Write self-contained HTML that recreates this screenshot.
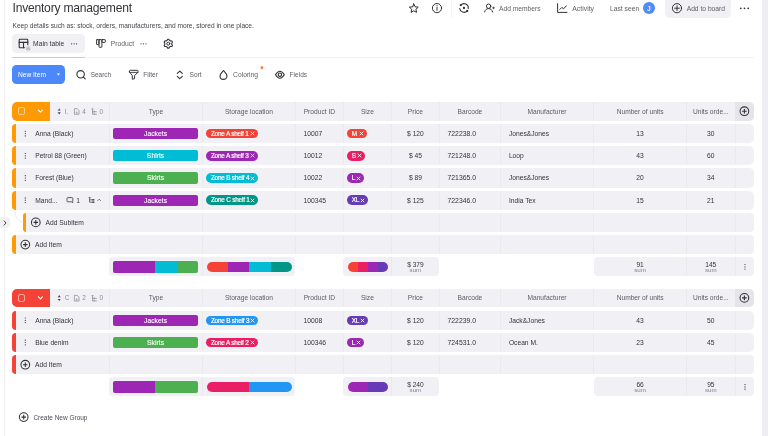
<!DOCTYPE html>
<html><head><meta charset="utf-8"><style>
html,body{margin:0;padding:0;}
body{width:768px;height:436px;overflow:hidden;position:relative;background:#fff;font-family:"Liberation Sans",sans-serif;}
.t{position:absolute;white-space:nowrap;line-height:1;}
.b{position:absolute;}
svg.b{overflow:visible;}
</style></head><body>
<div id="root" style="position:absolute;left:0;top:0;width:768px;height:436px;overflow:hidden;background:#fff;will-change:transform;">
<div class="b" style="left:4.00px;top:0.00px;width:0.80px;height:436.00px;background:#efeff3;border-radius:0;"></div>
<div class="b" style="left:762.00px;top:0.00px;width:6.00px;height:436.00px;background:#efeff3;border-radius:0;"></div>
<div class="t" style="left:12.50px;top:2px;font-size:12.1px;color:#323338;font-weight:400;letter-spacing:-0.22px;">Inventory management</div>
<div class="t" style="left:12.50px;top:23px;font-size:6.62px;color:#44454d;font-weight:400;">Keep details such as: stock, orders, manufacturers, and more, stored in one place.</div>
<div class="b" style="left:450.80px;top:0.00px;width:0.50px;height:18.00px;background:#f3f3f6;border-radius:0;"></div>
<div class="t" style="left:499.00px;top:6px;font-size:6.68px;color:#606168;font-weight:400;">Add members</div>
<div class="t" style="left:572.30px;top:6px;font-size:6.85px;color:#606168;font-weight:400;">Activity</div>
<div class="t" style="left:610.00px;top:6px;font-size:6.73px;color:#606168;font-weight:400;">Last seen</div>
<div class="b" style="left:643.00px;top:2.40px;width:11.60px;height:11.60px;background:#4f8cf6;border-radius:50%;"></div>
<div class="t" style="left:549.00px;width:200px;text-align:center;top:6px;font-size:6.6px;color:#ffffff;font-weight:400;-webkit-text-stroke:0.2px #fff;">J</div>
<div class="b" style="left:665.30px;top:-6.00px;width:65.70px;height:24.30px;background:#f0f0f5;border-radius:5px;"></div>
<div class="t" style="left:686.70px;top:6px;font-size:6.69px;color:#606168;font-weight:400;">Add to board</div>
<div class="b" style="left:12.00px;top:34.30px;width:73.20px;height:19.10px;background:#f0f0f5;border-radius:4.5px;"></div>
<div class="t" style="left:33.10px;top:41px;font-size:6.74px;color:#323338;font-weight:400;">Main table</div>
<div class="b" style="left:12.00px;top:56.50px;width:73.20px;height:1.10px;background:#b4cff9;border-radius:0;"></div>
<div class="b" style="left:85.20px;top:56.80px;width:669.30px;height:0.70px;background:#f2f2f5;border-radius:0;"></div>
<div class="t" style="left:110.80px;top:41px;font-size:6.74px;color:#606168;font-weight:400;">Product</div>
<div class="b" style="left:12.00px;top:65.20px;width:52.80px;height:18.80px;background:#4d88fa;border-radius:4.5px;"></div>
<div class="t" style="left:17.90px;top:72px;font-size:6.65px;color:#ffffff;font-weight:400;">New Item</div>
<div class="t" style="left:90.80px;top:72px;font-size:6.4px;color:#606168;font-weight:400;">Search</div>
<div class="t" style="left:143.30px;top:72px;font-size:6.57px;color:#606168;font-weight:400;">Filter</div>
<div class="t" style="left:189.60px;top:72px;font-size:6.6px;color:#606168;font-weight:400;">Sort</div>
<div class="t" style="left:233.10px;top:72px;font-size:6.71px;color:#606168;font-weight:400;">Coloring</div>
<div class="t" style="left:289.60px;top:72px;font-size:6.55px;color:#606168;font-weight:400;">Fields</div>
<div class="b" style="left:12.00px;top:101.80px;width:742.00px;height:18.80px;background:#f0f0f5;border-radius:5px;"></div>
<div class="b" style="left:735.00px;top:101.80px;width:19.00px;height:18.80px;background:#e4e4ea;border-radius:0 5px 5px 0;"></div>
<div class="b" style="left:12.00px;top:101.80px;width:37.80px;height:18.80px;background:#ff9a05;border-radius:5px 0 0 5px;"></div>
<div class="b" style="left:108.90px;top:101.80px;width:0.80px;height:18.80px;background:#e9e9ef;border-radius:0;"></div>
<div class="b" style="left:202.10px;top:101.80px;width:0.80px;height:18.80px;background:#e9e9ef;border-radius:0;"></div>
<div class="b" style="left:294.90px;top:101.80px;width:0.80px;height:18.80px;background:#e9e9ef;border-radius:0;"></div>
<div class="b" style="left:343.00px;top:101.80px;width:0.80px;height:18.80px;background:#e9e9ef;border-radius:0;"></div>
<div class="b" style="left:391.00px;top:101.80px;width:0.80px;height:18.80px;background:#e9e9ef;border-radius:0;"></div>
<div class="b" style="left:439.10px;top:101.80px;width:0.80px;height:18.80px;background:#e9e9ef;border-radius:0;"></div>
<div class="b" style="left:500.00px;top:101.80px;width:0.80px;height:18.80px;background:#e9e9ef;border-radius:0;"></div>
<div class="b" style="left:593.20px;top:101.80px;width:0.80px;height:18.80px;background:#e9e9ef;border-radius:0;"></div>
<div class="b" style="left:686.20px;top:101.80px;width:0.80px;height:18.80px;background:#e9e9ef;border-radius:0;"></div>
<div class="b" style="left:18.00px;top:107.40px;width:7.20px;height:7.80px;background:transparent;border-radius:2px;box-sizing:border-box;border:0.8px solid rgba(255,255,255,0.55);"></div>
<div class="t" style="left:64.80px;top:109px;font-size:6.4px;color:#8a8b96;font-weight:400;">I.</div>
<div class="t" style="left:82.30px;top:109px;font-size:6.4px;color:#8a8b96;font-weight:400;">4</div>
<div class="t" style="left:99.40px;top:109px;font-size:6.4px;color:#8a8b96;font-weight:400;">0</div>
<div class="t" style="left:55.90px;width:200px;text-align:center;top:109px;font-size:6.65px;color:#5c5d64;font-weight:400;">Type</div>
<div class="t" style="left:148.90px;width:200px;text-align:center;top:109px;font-size:6.65px;color:#5c5d64;font-weight:400;">Storage location</div>
<div class="t" style="left:219.35px;width:200px;text-align:center;top:109px;font-size:6.65px;color:#5c5d64;font-weight:400;">Product ID</div>
<div class="t" style="left:267.40px;width:200px;text-align:center;top:109px;font-size:6.65px;color:#5c5d64;font-weight:400;">Size</div>
<div class="t" style="left:315.45px;width:200px;text-align:center;top:109px;font-size:6.65px;color:#5c5d64;font-weight:400;">Price</div>
<div class="t" style="left:369.95px;width:200px;text-align:center;top:109px;font-size:6.65px;color:#5c5d64;font-weight:400;">Barcode</div>
<div class="t" style="left:447.00px;width:200px;text-align:center;top:109px;font-size:6.65px;color:#5c5d64;font-weight:400;">Manufacturer</div>
<div class="t" style="left:540.10px;width:200px;text-align:center;top:109px;font-size:6.65px;color:#5c5d64;font-weight:400;">Number of units</div>
<div class="t" style="left:610.80px;width:200px;text-align:center;top:109px;font-size:6.65px;color:#5c5d64;font-weight:400;">Units orde...</div>

<div class="b" style="left:12.00px;top:124.00px;width:742.00px;height:19.20px;background:#f0f0f5;border-radius:4px 5px 5px 4px;"></div>
<div class="b" style="left:12.00px;top:124.00px;width:4.00px;height:19.20px;background:#ff9a05;border-radius:4px 0 0 4px;"></div>
<div class="b" style="left:108.90px;top:124.00px;width:0.80px;height:19.20px;background:#e9e9ef;border-radius:0;"></div>
<div class="b" style="left:202.10px;top:124.00px;width:0.80px;height:19.20px;background:#e9e9ef;border-radius:0;"></div>
<div class="b" style="left:294.90px;top:124.00px;width:0.80px;height:19.20px;background:#e9e9ef;border-radius:0;"></div>
<div class="b" style="left:343.00px;top:124.00px;width:0.80px;height:19.20px;background:#e9e9ef;border-radius:0;"></div>
<div class="b" style="left:391.00px;top:124.00px;width:0.80px;height:19.20px;background:#e9e9ef;border-radius:0;"></div>
<div class="b" style="left:439.10px;top:124.00px;width:0.80px;height:19.20px;background:#e9e9ef;border-radius:0;"></div>
<div class="b" style="left:500.00px;top:124.00px;width:0.80px;height:19.20px;background:#e9e9ef;border-radius:0;"></div>
<div class="b" style="left:593.20px;top:124.00px;width:0.80px;height:19.20px;background:#e9e9ef;border-radius:0;"></div>
<div class="b" style="left:686.20px;top:124.00px;width:0.80px;height:19.20px;background:#e9e9ef;border-radius:0;"></div>
<div class="b" style="left:734.60px;top:124.00px;width:0.80px;height:19.20px;background:#e9e9ef;border-radius:0;"></div>

<div class="t" style="left:35.20px;top:131px;font-size:6.68px;color:#323338;font-weight:400;">Anna (Black)</div>
<div class="b" style="left:112.90px;top:128.05px;width:85.30px;height:11.10px;background:#9d27b4;border-radius:2px;"></div>
<div class="t" style="left:55.55px;width:200px;text-align:center;top:131px;font-size:6.8px;color:#ffffff;font-weight:400;-webkit-text-stroke:0.1px #fff;">Jackets</div>
<div class="b" style="left:206.40px;top:128.85px;width:51.90px;height:9.50px;background:#f44336;border-radius:5px;"></div>
<div class="t" style="left:210.90px;top:131px;font-size:6.4px;color:#ffffff;font-weight:400;-webkit-text-stroke:0.2px #fff;letter-spacing:-0.2px;">Zone A shelf 1</div>
<svg class="b" style="left:250.00px;top:131.20px;" width="5" height="5" viewBox="0 0 5 5"><path d="M0.75 0.75 L4.25 4.25 M4.25 0.75 L0.75 4.25" stroke="#ffffff" stroke-width="0.85" stroke-linecap="butt"/></svg>
<div class="t" style="left:303.60px;top:131px;font-size:6.76px;color:#323338;font-weight:400;">10007</div>
<div class="b" style="left:347.30px;top:128.85px;width:19.50px;height:9.50px;background:#f44336;border-radius:5px;"></div>
<div class="t" style="left:351.80px;top:131px;font-size:6.4px;color:#ffffff;font-weight:400;-webkit-text-stroke:0.2px #fff;letter-spacing:-0.2px;">M</div>
<svg class="b" style="left:358.50px;top:131.20px;" width="5" height="5" viewBox="0 0 5 5"><path d="M0.75 0.75 L4.25 4.25 M4.25 0.75 L0.75 4.25" stroke="#ffffff" stroke-width="0.85" stroke-linecap="butt"/></svg>
<div class="t" style="left:315.45px;width:200px;text-align:center;top:131px;font-size:6.7px;color:#323338;font-weight:400;">$ 120</div>
<div class="t" style="left:447.50px;top:131px;font-size:6.83px;color:#323338;font-weight:400;">722238.0</div>
<div class="t" style="left:508.90px;top:131px;font-size:6.7px;color:#323338;font-weight:400;">Jones&amp;Jones</div>
<div class="t" style="left:540.10px;width:200px;text-align:center;top:131px;font-size:6.7px;color:#323338;font-weight:400;">13</div>
<div class="t" style="left:610.80px;width:200px;text-align:center;top:131px;font-size:6.7px;color:#323338;font-weight:400;">30</div>
<div class="b" style="left:12.00px;top:146.20px;width:742.00px;height:19.20px;background:#f0f0f5;border-radius:4px 5px 5px 4px;"></div>
<div class="b" style="left:12.00px;top:146.20px;width:4.00px;height:19.20px;background:#ff9a05;border-radius:4px 0 0 4px;"></div>
<div class="b" style="left:108.90px;top:146.20px;width:0.80px;height:19.20px;background:#e9e9ef;border-radius:0;"></div>
<div class="b" style="left:202.10px;top:146.20px;width:0.80px;height:19.20px;background:#e9e9ef;border-radius:0;"></div>
<div class="b" style="left:294.90px;top:146.20px;width:0.80px;height:19.20px;background:#e9e9ef;border-radius:0;"></div>
<div class="b" style="left:343.00px;top:146.20px;width:0.80px;height:19.20px;background:#e9e9ef;border-radius:0;"></div>
<div class="b" style="left:391.00px;top:146.20px;width:0.80px;height:19.20px;background:#e9e9ef;border-radius:0;"></div>
<div class="b" style="left:439.10px;top:146.20px;width:0.80px;height:19.20px;background:#e9e9ef;border-radius:0;"></div>
<div class="b" style="left:500.00px;top:146.20px;width:0.80px;height:19.20px;background:#e9e9ef;border-radius:0;"></div>
<div class="b" style="left:593.20px;top:146.20px;width:0.80px;height:19.20px;background:#e9e9ef;border-radius:0;"></div>
<div class="b" style="left:686.20px;top:146.20px;width:0.80px;height:19.20px;background:#e9e9ef;border-radius:0;"></div>
<div class="b" style="left:734.60px;top:146.20px;width:0.80px;height:19.20px;background:#e9e9ef;border-radius:0;"></div>

<div class="t" style="left:35.20px;top:153px;font-size:6.68px;color:#323338;font-weight:400;">Petrol 88 (Green)</div>
<div class="b" style="left:112.90px;top:150.25px;width:85.30px;height:11.10px;background:#00bcd4;border-radius:2px;"></div>
<div class="t" style="left:55.55px;width:200px;text-align:center;top:153px;font-size:6.8px;color:#ffffff;font-weight:400;-webkit-text-stroke:0.1px #fff;">Shirts</div>
<div class="b" style="left:206.40px;top:151.05px;width:51.90px;height:9.50px;background:#9d27b4;border-radius:5px;"></div>
<div class="t" style="left:210.90px;top:153px;font-size:6.4px;color:#ffffff;font-weight:400;-webkit-text-stroke:0.2px #fff;letter-spacing:-0.2px;">Zone A shelf 3</div>
<svg class="b" style="left:250.00px;top:153.40px;" width="5" height="5" viewBox="0 0 5 5"><path d="M0.75 0.75 L4.25 4.25 M4.25 0.75 L0.75 4.25" stroke="#ffffff" stroke-width="0.85" stroke-linecap="butt"/></svg>
<div class="t" style="left:303.60px;top:153px;font-size:6.76px;color:#323338;font-weight:400;">10012</div>
<div class="b" style="left:347.30px;top:151.05px;width:17.50px;height:9.50px;background:#e91e63;border-radius:5px;"></div>
<div class="t" style="left:351.80px;top:153px;font-size:6.4px;color:#ffffff;font-weight:400;-webkit-text-stroke:0.2px #fff;letter-spacing:-0.2px;">S</div>
<svg class="b" style="left:356.50px;top:153.40px;" width="5" height="5" viewBox="0 0 5 5"><path d="M0.75 0.75 L4.25 4.25 M4.25 0.75 L0.75 4.25" stroke="#ffffff" stroke-width="0.85" stroke-linecap="butt"/></svg>
<div class="t" style="left:315.45px;width:200px;text-align:center;top:153px;font-size:6.7px;color:#323338;font-weight:400;">$ 45</div>
<div class="t" style="left:447.50px;top:153px;font-size:6.83px;color:#323338;font-weight:400;">721248.0</div>
<div class="t" style="left:508.90px;top:153px;font-size:6.7px;color:#323338;font-weight:400;">Loop</div>
<div class="t" style="left:540.10px;width:200px;text-align:center;top:153px;font-size:6.7px;color:#323338;font-weight:400;">43</div>
<div class="t" style="left:610.80px;width:200px;text-align:center;top:153px;font-size:6.7px;color:#323338;font-weight:400;">60</div>
<div class="b" style="left:12.00px;top:168.40px;width:742.00px;height:19.20px;background:#f0f0f5;border-radius:4px 5px 5px 4px;"></div>
<div class="b" style="left:12.00px;top:168.40px;width:4.00px;height:19.20px;background:#ff9a05;border-radius:4px 0 0 4px;"></div>
<div class="b" style="left:108.90px;top:168.40px;width:0.80px;height:19.20px;background:#e9e9ef;border-radius:0;"></div>
<div class="b" style="left:202.10px;top:168.40px;width:0.80px;height:19.20px;background:#e9e9ef;border-radius:0;"></div>
<div class="b" style="left:294.90px;top:168.40px;width:0.80px;height:19.20px;background:#e9e9ef;border-radius:0;"></div>
<div class="b" style="left:343.00px;top:168.40px;width:0.80px;height:19.20px;background:#e9e9ef;border-radius:0;"></div>
<div class="b" style="left:391.00px;top:168.40px;width:0.80px;height:19.20px;background:#e9e9ef;border-radius:0;"></div>
<div class="b" style="left:439.10px;top:168.40px;width:0.80px;height:19.20px;background:#e9e9ef;border-radius:0;"></div>
<div class="b" style="left:500.00px;top:168.40px;width:0.80px;height:19.20px;background:#e9e9ef;border-radius:0;"></div>
<div class="b" style="left:593.20px;top:168.40px;width:0.80px;height:19.20px;background:#e9e9ef;border-radius:0;"></div>
<div class="b" style="left:686.20px;top:168.40px;width:0.80px;height:19.20px;background:#e9e9ef;border-radius:0;"></div>
<div class="b" style="left:734.60px;top:168.40px;width:0.80px;height:19.20px;background:#e9e9ef;border-radius:0;"></div>

<div class="t" style="left:35.20px;top:175px;font-size:6.68px;color:#323338;font-weight:400;">Forest (Blue)</div>
<div class="b" style="left:112.90px;top:172.45px;width:85.30px;height:11.10px;background:#4caf50;border-radius:2px;"></div>
<div class="t" style="left:55.55px;width:200px;text-align:center;top:175px;font-size:6.8px;color:#ffffff;font-weight:400;-webkit-text-stroke:0.1px #fff;">Skirts</div>
<div class="b" style="left:206.40px;top:173.25px;width:51.90px;height:9.50px;background:#00bcd4;border-radius:5px;"></div>
<div class="t" style="left:210.90px;top:175px;font-size:6.4px;color:#ffffff;font-weight:400;-webkit-text-stroke:0.2px #fff;letter-spacing:-0.2px;">Zone B shelf 4</div>
<svg class="b" style="left:250.00px;top:175.60px;" width="5" height="5" viewBox="0 0 5 5"><path d="M0.75 0.75 L4.25 4.25 M4.25 0.75 L0.75 4.25" stroke="#ffffff" stroke-width="0.85" stroke-linecap="butt"/></svg>
<div class="t" style="left:303.60px;top:175px;font-size:6.76px;color:#323338;font-weight:400;">10022</div>
<div class="b" style="left:347.30px;top:173.25px;width:17.20px;height:9.50px;background:#9d27b4;border-radius:5px;"></div>
<div class="t" style="left:351.80px;top:175px;font-size:6.4px;color:#ffffff;font-weight:400;-webkit-text-stroke:0.2px #fff;letter-spacing:-0.2px;">L</div>
<svg class="b" style="left:356.20px;top:175.60px;" width="5" height="5" viewBox="0 0 5 5"><path d="M0.75 0.75 L4.25 4.25 M4.25 0.75 L0.75 4.25" stroke="#ffffff" stroke-width="0.85" stroke-linecap="butt"/></svg>
<div class="t" style="left:315.45px;width:200px;text-align:center;top:175px;font-size:6.7px;color:#323338;font-weight:400;">$ 89</div>
<div class="t" style="left:447.50px;top:175px;font-size:6.83px;color:#323338;font-weight:400;">721365.0</div>
<div class="t" style="left:508.90px;top:175px;font-size:6.7px;color:#323338;font-weight:400;">Jones&amp;Jones</div>
<div class="t" style="left:540.10px;width:200px;text-align:center;top:175px;font-size:6.7px;color:#323338;font-weight:400;">20</div>
<div class="t" style="left:610.80px;width:200px;text-align:center;top:175px;font-size:6.7px;color:#323338;font-weight:400;">34</div>
<div class="b" style="left:12.00px;top:190.60px;width:742.00px;height:19.20px;background:#f0f0f5;border-radius:4px 5px 5px 4px;"></div>
<div class="b" style="left:12.00px;top:190.60px;width:4.00px;height:19.20px;background:#ff9a05;border-radius:4px 0 0 4px;"></div>
<div class="b" style="left:108.90px;top:190.60px;width:0.80px;height:19.20px;background:#e9e9ef;border-radius:0;"></div>
<div class="b" style="left:202.10px;top:190.60px;width:0.80px;height:19.20px;background:#e9e9ef;border-radius:0;"></div>
<div class="b" style="left:294.90px;top:190.60px;width:0.80px;height:19.20px;background:#e9e9ef;border-radius:0;"></div>
<div class="b" style="left:343.00px;top:190.60px;width:0.80px;height:19.20px;background:#e9e9ef;border-radius:0;"></div>
<div class="b" style="left:391.00px;top:190.60px;width:0.80px;height:19.20px;background:#e9e9ef;border-radius:0;"></div>
<div class="b" style="left:439.10px;top:190.60px;width:0.80px;height:19.20px;background:#e9e9ef;border-radius:0;"></div>
<div class="b" style="left:500.00px;top:190.60px;width:0.80px;height:19.20px;background:#e9e9ef;border-radius:0;"></div>
<div class="b" style="left:593.20px;top:190.60px;width:0.80px;height:19.20px;background:#e9e9ef;border-radius:0;"></div>
<div class="b" style="left:686.20px;top:190.60px;width:0.80px;height:19.20px;background:#e9e9ef;border-radius:0;"></div>
<div class="b" style="left:734.60px;top:190.60px;width:0.80px;height:19.20px;background:#e9e9ef;border-radius:0;"></div>

<div class="t" style="left:35.20px;top:198px;font-size:6.68px;color:#323338;font-weight:400;">Mand...</div>
<div class="t" style="left:76.20px;top:198px;font-size:6.7px;color:#323338;font-weight:400;">1</div>
<div class="b" style="left:112.90px;top:194.65px;width:85.30px;height:11.10px;background:#9d27b4;border-radius:2px;"></div>
<div class="t" style="left:55.55px;width:200px;text-align:center;top:198px;font-size:6.8px;color:#ffffff;font-weight:400;-webkit-text-stroke:0.1px #fff;">Jackets</div>
<div class="b" style="left:206.40px;top:195.45px;width:51.90px;height:9.50px;background:#009688;border-radius:5px;"></div>
<div class="t" style="left:210.90px;top:197px;font-size:6.4px;color:#ffffff;font-weight:400;-webkit-text-stroke:0.2px #fff;letter-spacing:-0.2px;">Zone C shelf 1</div>
<svg class="b" style="left:250.00px;top:197.80px;" width="5" height="5" viewBox="0 0 5 5"><path d="M0.75 0.75 L4.25 4.25 M4.25 0.75 L0.75 4.25" stroke="#ffffff" stroke-width="0.85" stroke-linecap="butt"/></svg>
<div class="t" style="left:303.60px;top:198px;font-size:6.76px;color:#323338;font-weight:400;">100345</div>
<div class="b" style="left:347.30px;top:195.45px;width:21.00px;height:9.50px;background:#673ab7;border-radius:5px;"></div>
<div class="t" style="left:351.80px;top:197px;font-size:6.4px;color:#ffffff;font-weight:400;-webkit-text-stroke:0.2px #fff;letter-spacing:-0.2px;">XL</div>
<svg class="b" style="left:360.00px;top:197.80px;" width="5" height="5" viewBox="0 0 5 5"><path d="M0.75 0.75 L4.25 4.25 M4.25 0.75 L0.75 4.25" stroke="#ffffff" stroke-width="0.85" stroke-linecap="butt"/></svg>
<div class="t" style="left:315.45px;width:200px;text-align:center;top:198px;font-size:6.7px;color:#323338;font-weight:400;">$ 125</div>
<div class="t" style="left:447.50px;top:198px;font-size:6.83px;color:#323338;font-weight:400;">722346.0</div>
<div class="t" style="left:508.90px;top:198px;font-size:6.7px;color:#323338;font-weight:400;">India Tex</div>
<div class="t" style="left:540.10px;width:200px;text-align:center;top:198px;font-size:6.7px;color:#323338;font-weight:400;">15</div>
<div class="t" style="left:610.80px;width:200px;text-align:center;top:198px;font-size:6.7px;color:#323338;font-weight:400;">21</div>
<div class="b" style="left:22.60px;top:212.80px;width:731.40px;height:19.20px;background:#f0f0f5;border-radius:4px;"></div>
<div class="b" style="left:22.60px;top:212.80px;width:3.80px;height:19.20px;background:#ff9a05;border-radius:4px 0 0 4px;"></div>
<div class="b" style="left:108.90px;top:212.80px;width:0.80px;height:19.20px;background:#e9e9ef;border-radius:0;"></div>
<div class="b" style="left:202.10px;top:212.80px;width:0.80px;height:19.20px;background:#e9e9ef;border-radius:0;"></div>
<div class="b" style="left:294.90px;top:212.80px;width:0.80px;height:19.20px;background:#e9e9ef;border-radius:0;"></div>
<div class="b" style="left:343.00px;top:212.80px;width:0.80px;height:19.20px;background:#e9e9ef;border-radius:0;"></div>
<div class="b" style="left:391.00px;top:212.80px;width:0.80px;height:19.20px;background:#e9e9ef;border-radius:0;"></div>
<div class="b" style="left:439.10px;top:212.80px;width:0.80px;height:19.20px;background:#e9e9ef;border-radius:0;"></div>
<div class="b" style="left:500.00px;top:212.80px;width:0.80px;height:19.20px;background:#e9e9ef;border-radius:0;"></div>
<div class="b" style="left:593.20px;top:212.80px;width:0.80px;height:19.20px;background:#e9e9ef;border-radius:0;"></div>
<div class="b" style="left:686.20px;top:212.80px;width:0.80px;height:19.20px;background:#e9e9ef;border-radius:0;"></div>
<div class="b" style="left:734.60px;top:212.80px;width:0.80px;height:19.20px;background:#e9e9ef;border-radius:0;"></div>

<div class="t" style="left:45.60px;top:220px;font-size:6.69px;color:#323338;font-weight:400;">Add Subitem</div>
<div class="b" style="left:12.00px;top:235.00px;width:742.00px;height:19.20px;background:#f0f0f5;border-radius:4px;"></div>
<div class="b" style="left:12.00px;top:235.00px;width:4.00px;height:19.20px;background:#ff9a05;border-radius:4px 0 0 4px;"></div>
<div class="b" style="left:108.90px;top:235.00px;width:0.80px;height:19.20px;background:#e9e9ef;border-radius:0;"></div>
<div class="b" style="left:202.10px;top:235.00px;width:0.80px;height:19.20px;background:#e9e9ef;border-radius:0;"></div>
<div class="b" style="left:294.90px;top:235.00px;width:0.80px;height:19.20px;background:#e9e9ef;border-radius:0;"></div>
<div class="b" style="left:343.00px;top:235.00px;width:0.80px;height:19.20px;background:#e9e9ef;border-radius:0;"></div>
<div class="b" style="left:391.00px;top:235.00px;width:0.80px;height:19.20px;background:#e9e9ef;border-radius:0;"></div>
<div class="b" style="left:439.10px;top:235.00px;width:0.80px;height:19.20px;background:#e9e9ef;border-radius:0;"></div>
<div class="b" style="left:500.00px;top:235.00px;width:0.80px;height:19.20px;background:#e9e9ef;border-radius:0;"></div>
<div class="b" style="left:593.20px;top:235.00px;width:0.80px;height:19.20px;background:#e9e9ef;border-radius:0;"></div>
<div class="b" style="left:686.20px;top:235.00px;width:0.80px;height:19.20px;background:#e9e9ef;border-radius:0;"></div>
<div class="b" style="left:734.60px;top:235.00px;width:0.80px;height:19.20px;background:#e9e9ef;border-radius:0;"></div>

<div class="t" style="left:35.00px;top:242px;font-size:6.7px;color:#323338;font-weight:400;">Add Item</div>
<div class="b" style="left:109.30px;top:257.20px;width:186.00px;height:19.20px;background:#f0f0f5;border-radius:4px;"></div>
<div class="b" style="left:202.10px;top:257.20px;width:0.80px;height:19.20px;background:#e9e9ef;border-radius:0;"></div>
<div class="b" style="left:343.40px;top:257.20px;width:96.10px;height:19.20px;background:#f0f0f5;border-radius:4px;"></div>
<div class="b" style="left:391.00px;top:257.20px;width:0.80px;height:19.20px;background:#e9e9ef;border-radius:0;"></div>
<div class="b" style="left:593.60px;top:257.20px;width:160.40px;height:19.20px;background:#f0f0f5;border-radius:4px;"></div>
<div class="b" style="left:686.20px;top:257.20px;width:0.80px;height:19.20px;background:#e9e9ef;border-radius:0;"></div>
<div class="b" style="left:734.60px;top:257.20px;width:0.80px;height:19.20px;background:#e9e9ef;border-radius:0;"></div>
<div class="b" style="left:113.00px;top:261.35px;width:85.30px;height:11.20px;background:linear-gradient(90deg,#9d27b4 0.00%, #9d27b4 50.00%,#00bcd4 50.00%, #00bcd4 75.00%,#4caf50 75.00%, #4caf50 100.00%);border-radius:2px;"></div>
<div class="b" style="left:206.50px;top:262.10px;width:85.20px;height:9.70px;background:linear-gradient(90deg,#f44336 0.00%, #f44336 25.00%,#9d27b4 25.00%, #9d27b4 50.00%,#00bcd4 50.00%, #00bcd4 75.00%,#009688 75.00%, #009688 100.00%);border-radius:5px;"></div>
<div class="b" style="left:347.50px;top:262.10px;width:40.30px;height:9.70px;background:linear-gradient(90deg,#f44336 0.00%, #f44336 25.00%,#e91e63 25.00%, #e91e63 50.00%,#9d27b4 50.00%, #9d27b4 75.00%,#673ab7 75.00%, #673ab7 100.00%);border-radius:5px;"></div>
<div class="t" style="left:315.45px;width:200px;text-align:center;top:262px;font-size:6.6px;color:#323338;font-weight:400;">$ 379</div>
<div class="t" style="left:315.45px;width:200px;text-align:center;top:267px;font-size:6.2px;color:#80818c;font-weight:400;">sum</div>
<div class="t" style="left:540.10px;width:200px;text-align:center;top:262px;font-size:6.6px;color:#323338;font-weight:400;">91</div>
<div class="t" style="left:540.10px;width:200px;text-align:center;top:267px;font-size:6.2px;color:#80818c;font-weight:400;">sum</div>
<div class="t" style="left:610.80px;width:200px;text-align:center;top:262px;font-size:6.6px;color:#323338;font-weight:400;">145</div>
<div class="t" style="left:610.80px;width:200px;text-align:center;top:267px;font-size:6.2px;color:#80818c;font-weight:400;">sum</div>

<div class="b" style="left:12.00px;top:288.50px;width:742.00px;height:18.80px;background:#f0f0f5;border-radius:5px;"></div>
<div class="b" style="left:735.00px;top:288.50px;width:19.00px;height:18.80px;background:#e4e4ea;border-radius:0 5px 5px 0;"></div>
<div class="b" style="left:12.00px;top:288.50px;width:37.80px;height:18.80px;background:#f44336;border-radius:5px 0 0 5px;"></div>
<div class="b" style="left:108.90px;top:288.50px;width:0.80px;height:18.80px;background:#e9e9ef;border-radius:0;"></div>
<div class="b" style="left:202.10px;top:288.50px;width:0.80px;height:18.80px;background:#e9e9ef;border-radius:0;"></div>
<div class="b" style="left:294.90px;top:288.50px;width:0.80px;height:18.80px;background:#e9e9ef;border-radius:0;"></div>
<div class="b" style="left:343.00px;top:288.50px;width:0.80px;height:18.80px;background:#e9e9ef;border-radius:0;"></div>
<div class="b" style="left:391.00px;top:288.50px;width:0.80px;height:18.80px;background:#e9e9ef;border-radius:0;"></div>
<div class="b" style="left:439.10px;top:288.50px;width:0.80px;height:18.80px;background:#e9e9ef;border-radius:0;"></div>
<div class="b" style="left:500.00px;top:288.50px;width:0.80px;height:18.80px;background:#e9e9ef;border-radius:0;"></div>
<div class="b" style="left:593.20px;top:288.50px;width:0.80px;height:18.80px;background:#e9e9ef;border-radius:0;"></div>
<div class="b" style="left:686.20px;top:288.50px;width:0.80px;height:18.80px;background:#e9e9ef;border-radius:0;"></div>
<div class="b" style="left:18.00px;top:294.10px;width:7.20px;height:7.80px;background:transparent;border-radius:2px;box-sizing:border-box;border:0.8px solid rgba(255,255,255,0.55);"></div>
<div class="t" style="left:64.80px;top:295px;font-size:6.4px;color:#8a8b96;font-weight:400;">C</div>
<div class="t" style="left:82.30px;top:295px;font-size:6.4px;color:#8a8b96;font-weight:400;">2</div>
<div class="t" style="left:99.40px;top:295px;font-size:6.4px;color:#8a8b96;font-weight:400;">0</div>
<div class="t" style="left:55.90px;width:200px;text-align:center;top:295px;font-size:6.65px;color:#5c5d64;font-weight:400;">Type</div>
<div class="t" style="left:148.90px;width:200px;text-align:center;top:295px;font-size:6.65px;color:#5c5d64;font-weight:400;">Storage location</div>
<div class="t" style="left:219.35px;width:200px;text-align:center;top:295px;font-size:6.65px;color:#5c5d64;font-weight:400;">Product ID</div>
<div class="t" style="left:267.40px;width:200px;text-align:center;top:295px;font-size:6.65px;color:#5c5d64;font-weight:400;">Size</div>
<div class="t" style="left:315.45px;width:200px;text-align:center;top:295px;font-size:6.65px;color:#5c5d64;font-weight:400;">Price</div>
<div class="t" style="left:369.95px;width:200px;text-align:center;top:295px;font-size:6.65px;color:#5c5d64;font-weight:400;">Barcode</div>
<div class="t" style="left:447.00px;width:200px;text-align:center;top:295px;font-size:6.65px;color:#5c5d64;font-weight:400;">Manufacturer</div>
<div class="t" style="left:540.10px;width:200px;text-align:center;top:295px;font-size:6.65px;color:#5c5d64;font-weight:400;">Number of units</div>
<div class="t" style="left:610.80px;width:200px;text-align:center;top:295px;font-size:6.65px;color:#5c5d64;font-weight:400;">Units orde...</div>

<div class="b" style="left:12.00px;top:310.70px;width:742.00px;height:19.20px;background:#f0f0f5;border-radius:4px 5px 5px 4px;"></div>
<div class="b" style="left:12.00px;top:310.70px;width:4.00px;height:19.20px;background:#f44336;border-radius:4px 0 0 4px;"></div>
<div class="b" style="left:108.90px;top:310.70px;width:0.80px;height:19.20px;background:#e9e9ef;border-radius:0;"></div>
<div class="b" style="left:202.10px;top:310.70px;width:0.80px;height:19.20px;background:#e9e9ef;border-radius:0;"></div>
<div class="b" style="left:294.90px;top:310.70px;width:0.80px;height:19.20px;background:#e9e9ef;border-radius:0;"></div>
<div class="b" style="left:343.00px;top:310.70px;width:0.80px;height:19.20px;background:#e9e9ef;border-radius:0;"></div>
<div class="b" style="left:391.00px;top:310.70px;width:0.80px;height:19.20px;background:#e9e9ef;border-radius:0;"></div>
<div class="b" style="left:439.10px;top:310.70px;width:0.80px;height:19.20px;background:#e9e9ef;border-radius:0;"></div>
<div class="b" style="left:500.00px;top:310.70px;width:0.80px;height:19.20px;background:#e9e9ef;border-radius:0;"></div>
<div class="b" style="left:593.20px;top:310.70px;width:0.80px;height:19.20px;background:#e9e9ef;border-radius:0;"></div>
<div class="b" style="left:686.20px;top:310.70px;width:0.80px;height:19.20px;background:#e9e9ef;border-radius:0;"></div>
<div class="b" style="left:734.60px;top:310.70px;width:0.80px;height:19.20px;background:#e9e9ef;border-radius:0;"></div>

<div class="t" style="left:35.20px;top:318px;font-size:6.68px;color:#323338;font-weight:400;">Anna (Black)</div>
<div class="b" style="left:112.90px;top:314.75px;width:85.30px;height:11.10px;background:#9d27b4;border-radius:2px;"></div>
<div class="t" style="left:55.55px;width:200px;text-align:center;top:318px;font-size:6.8px;color:#ffffff;font-weight:400;-webkit-text-stroke:0.1px #fff;">Jackets</div>
<div class="b" style="left:206.40px;top:315.55px;width:51.90px;height:9.50px;background:#2196f3;border-radius:5px;"></div>
<div class="t" style="left:210.90px;top:318px;font-size:6.4px;color:#ffffff;font-weight:400;-webkit-text-stroke:0.2px #fff;letter-spacing:-0.2px;">Zone B shelf 3</div>
<svg class="b" style="left:250.00px;top:317.90px;" width="5" height="5" viewBox="0 0 5 5"><path d="M0.75 0.75 L4.25 4.25 M4.25 0.75 L0.75 4.25" stroke="#ffffff" stroke-width="0.85" stroke-linecap="butt"/></svg>
<div class="t" style="left:303.60px;top:318px;font-size:6.76px;color:#323338;font-weight:400;">10008</div>
<div class="b" style="left:347.30px;top:315.55px;width:21.00px;height:9.50px;background:#673ab7;border-radius:5px;"></div>
<div class="t" style="left:351.80px;top:318px;font-size:6.4px;color:#ffffff;font-weight:400;-webkit-text-stroke:0.2px #fff;letter-spacing:-0.2px;">XL</div>
<svg class="b" style="left:360.00px;top:317.90px;" width="5" height="5" viewBox="0 0 5 5"><path d="M0.75 0.75 L4.25 4.25 M4.25 0.75 L0.75 4.25" stroke="#ffffff" stroke-width="0.85" stroke-linecap="butt"/></svg>
<div class="t" style="left:315.45px;width:200px;text-align:center;top:318px;font-size:6.7px;color:#323338;font-weight:400;">$ 120</div>
<div class="t" style="left:447.50px;top:318px;font-size:6.83px;color:#323338;font-weight:400;">722239.0</div>
<div class="t" style="left:508.90px;top:318px;font-size:6.7px;color:#323338;font-weight:400;">Jack&amp;Jones</div>
<div class="t" style="left:540.10px;width:200px;text-align:center;top:318px;font-size:6.7px;color:#323338;font-weight:400;">43</div>
<div class="t" style="left:610.80px;width:200px;text-align:center;top:318px;font-size:6.7px;color:#323338;font-weight:400;">50</div>
<div class="b" style="left:12.00px;top:332.90px;width:742.00px;height:19.20px;background:#f0f0f5;border-radius:4px 5px 5px 4px;"></div>
<div class="b" style="left:12.00px;top:332.90px;width:4.00px;height:19.20px;background:#f44336;border-radius:4px 0 0 4px;"></div>
<div class="b" style="left:108.90px;top:332.90px;width:0.80px;height:19.20px;background:#e9e9ef;border-radius:0;"></div>
<div class="b" style="left:202.10px;top:332.90px;width:0.80px;height:19.20px;background:#e9e9ef;border-radius:0;"></div>
<div class="b" style="left:294.90px;top:332.90px;width:0.80px;height:19.20px;background:#e9e9ef;border-radius:0;"></div>
<div class="b" style="left:343.00px;top:332.90px;width:0.80px;height:19.20px;background:#e9e9ef;border-radius:0;"></div>
<div class="b" style="left:391.00px;top:332.90px;width:0.80px;height:19.20px;background:#e9e9ef;border-radius:0;"></div>
<div class="b" style="left:439.10px;top:332.90px;width:0.80px;height:19.20px;background:#e9e9ef;border-radius:0;"></div>
<div class="b" style="left:500.00px;top:332.90px;width:0.80px;height:19.20px;background:#e9e9ef;border-radius:0;"></div>
<div class="b" style="left:593.20px;top:332.90px;width:0.80px;height:19.20px;background:#e9e9ef;border-radius:0;"></div>
<div class="b" style="left:686.20px;top:332.90px;width:0.80px;height:19.20px;background:#e9e9ef;border-radius:0;"></div>
<div class="b" style="left:734.60px;top:332.90px;width:0.80px;height:19.20px;background:#e9e9ef;border-radius:0;"></div>

<div class="t" style="left:35.20px;top:340px;font-size:6.68px;color:#323338;font-weight:400;">Blue denim</div>
<div class="b" style="left:112.90px;top:336.95px;width:85.30px;height:11.10px;background:#4caf50;border-radius:2px;"></div>
<div class="t" style="left:55.55px;width:200px;text-align:center;top:340px;font-size:6.8px;color:#ffffff;font-weight:400;-webkit-text-stroke:0.1px #fff;">Skirts</div>
<div class="b" style="left:206.40px;top:337.75px;width:51.90px;height:9.50px;background:#e91e63;border-radius:5px;"></div>
<div class="t" style="left:210.90px;top:340px;font-size:6.4px;color:#ffffff;font-weight:400;-webkit-text-stroke:0.2px #fff;letter-spacing:-0.2px;">Zone A shelf 2</div>
<svg class="b" style="left:250.00px;top:340.10px;" width="5" height="5" viewBox="0 0 5 5"><path d="M0.75 0.75 L4.25 4.25 M4.25 0.75 L0.75 4.25" stroke="#ffffff" stroke-width="0.85" stroke-linecap="butt"/></svg>
<div class="t" style="left:303.60px;top:340px;font-size:6.76px;color:#323338;font-weight:400;">100346</div>
<div class="b" style="left:347.30px;top:337.75px;width:17.20px;height:9.50px;background:#9d27b4;border-radius:5px;"></div>
<div class="t" style="left:351.80px;top:340px;font-size:6.4px;color:#ffffff;font-weight:400;-webkit-text-stroke:0.2px #fff;letter-spacing:-0.2px;">L</div>
<svg class="b" style="left:356.20px;top:340.10px;" width="5" height="5" viewBox="0 0 5 5"><path d="M0.75 0.75 L4.25 4.25 M4.25 0.75 L0.75 4.25" stroke="#ffffff" stroke-width="0.85" stroke-linecap="butt"/></svg>
<div class="t" style="left:315.45px;width:200px;text-align:center;top:340px;font-size:6.7px;color:#323338;font-weight:400;">$ 120</div>
<div class="t" style="left:447.50px;top:340px;font-size:6.83px;color:#323338;font-weight:400;">724531.0</div>
<div class="t" style="left:508.90px;top:340px;font-size:6.7px;color:#323338;font-weight:400;">Ocean M.</div>
<div class="t" style="left:540.10px;width:200px;text-align:center;top:340px;font-size:6.7px;color:#323338;font-weight:400;">23</div>
<div class="t" style="left:610.80px;width:200px;text-align:center;top:340px;font-size:6.7px;color:#323338;font-weight:400;">45</div>
<div class="b" style="left:12.00px;top:355.10px;width:742.00px;height:19.20px;background:#f0f0f5;border-radius:4px;"></div>
<div class="b" style="left:12.00px;top:355.10px;width:4.00px;height:19.20px;background:#f44336;border-radius:4px 0 0 4px;"></div>
<div class="b" style="left:108.90px;top:355.10px;width:0.80px;height:19.20px;background:#e9e9ef;border-radius:0;"></div>
<div class="b" style="left:202.10px;top:355.10px;width:0.80px;height:19.20px;background:#e9e9ef;border-radius:0;"></div>
<div class="b" style="left:294.90px;top:355.10px;width:0.80px;height:19.20px;background:#e9e9ef;border-radius:0;"></div>
<div class="b" style="left:343.00px;top:355.10px;width:0.80px;height:19.20px;background:#e9e9ef;border-radius:0;"></div>
<div class="b" style="left:391.00px;top:355.10px;width:0.80px;height:19.20px;background:#e9e9ef;border-radius:0;"></div>
<div class="b" style="left:439.10px;top:355.10px;width:0.80px;height:19.20px;background:#e9e9ef;border-radius:0;"></div>
<div class="b" style="left:500.00px;top:355.10px;width:0.80px;height:19.20px;background:#e9e9ef;border-radius:0;"></div>
<div class="b" style="left:593.20px;top:355.10px;width:0.80px;height:19.20px;background:#e9e9ef;border-radius:0;"></div>
<div class="b" style="left:686.20px;top:355.10px;width:0.80px;height:19.20px;background:#e9e9ef;border-radius:0;"></div>
<div class="b" style="left:734.60px;top:355.10px;width:0.80px;height:19.20px;background:#e9e9ef;border-radius:0;"></div>

<div class="t" style="left:35.00px;top:362px;font-size:6.7px;color:#323338;font-weight:400;">Add Item</div>
<div class="b" style="left:109.30px;top:377.30px;width:186.00px;height:19.20px;background:#f0f0f5;border-radius:4px;"></div>
<div class="b" style="left:202.10px;top:377.30px;width:0.80px;height:19.20px;background:#e9e9ef;border-radius:0;"></div>
<div class="b" style="left:343.40px;top:377.30px;width:96.10px;height:19.20px;background:#f0f0f5;border-radius:4px;"></div>
<div class="b" style="left:391.00px;top:377.30px;width:0.80px;height:19.20px;background:#e9e9ef;border-radius:0;"></div>
<div class="b" style="left:593.60px;top:377.30px;width:160.40px;height:19.20px;background:#f0f0f5;border-radius:4px;"></div>
<div class="b" style="left:686.20px;top:377.30px;width:0.80px;height:19.20px;background:#e9e9ef;border-radius:0;"></div>
<div class="b" style="left:734.60px;top:377.30px;width:0.80px;height:19.20px;background:#e9e9ef;border-radius:0;"></div>
<div class="b" style="left:113.00px;top:381.45px;width:85.30px;height:11.20px;background:linear-gradient(90deg,#9d27b4 0.00%, #9d27b4 50.00%,#4caf50 50.00%, #4caf50 100.00%);border-radius:2px;"></div>
<div class="b" style="left:206.50px;top:382.20px;width:85.20px;height:9.70px;background:linear-gradient(90deg,#e91e63 0.00%, #e91e63 50.00%,#2196f3 50.00%, #2196f3 100.00%);border-radius:5px;"></div>
<div class="b" style="left:347.50px;top:382.20px;width:40.30px;height:9.70px;background:linear-gradient(90deg,#9d27b4 0.00%, #9d27b4 50.00%,#673ab7 50.00%, #673ab7 100.00%);border-radius:5px;"></div>
<div class="t" style="left:315.45px;width:200px;text-align:center;top:382px;font-size:6.6px;color:#323338;font-weight:400;">$ 240</div>
<div class="t" style="left:315.45px;width:200px;text-align:center;top:387px;font-size:6.2px;color:#80818c;font-weight:400;">sum</div>
<div class="t" style="left:540.10px;width:200px;text-align:center;top:382px;font-size:6.6px;color:#323338;font-weight:400;">66</div>
<div class="t" style="left:540.10px;width:200px;text-align:center;top:387px;font-size:6.2px;color:#80818c;font-weight:400;">sum</div>
<div class="t" style="left:610.80px;width:200px;text-align:center;top:382px;font-size:6.6px;color:#323338;font-weight:400;">95</div>
<div class="t" style="left:610.80px;width:200px;text-align:center;top:387px;font-size:6.2px;color:#80818c;font-weight:400;">sum</div>

<div class="b" style="left:-4.00px;top:216.70px;width:14.00px;height:11.00px;background:#f0f0f5;border-radius:4px;"></div>
<svg class="b" style="left:2.50px;top:219.50px;" width="4" height="6" viewBox="0 0 4 6"><path d="M0.8 0.6 L3 3 L0.8 5.4" fill="none" stroke="#323338" stroke-width="0.9"/></svg>

<div class="t" style="left:33.40px;top:415px;font-size:6.49px;color:#4b4c57;font-weight:400;">Create New Group</div>
<svg class="b" style="left:0;top:0" width="768" height="436" viewBox="0 0 768 436"><polygon points="413.80,3.90 415.09,6.82 418.27,7.15 415.89,9.28 416.56,12.40 413.80,10.80 411.04,12.40 411.71,9.28 409.33,7.15 412.51,6.82" fill="none" stroke="#323338" stroke-width="1.0" stroke-linejoin="round" stroke-linecap="round"/><circle cx="437" cy="8.1" r="4.6" fill="none" stroke="#323338" stroke-width="1.0" stroke-linejoin="round" stroke-linecap="round"/><line x1="437" y1="7.4" x2="437" y2="10.4" fill="none" stroke="#323338" stroke-width="0.95" stroke-linejoin="round" stroke-linecap="round"/><circle cx="437" cy="5.7" r="0.6" fill="#323338"/><path d="M460.80 5.12 A4.3 4.3 0 0 1 468.26 8.60" fill="none" stroke="#323338" stroke-width="1.05" stroke-linejoin="round" stroke-linecap="round"/><path d="M459.74 8.60 A4.3 4.3 0 0 0 467.20 10.88" fill="none" stroke="#323338" stroke-width="1.05" stroke-linejoin="round" stroke-linecap="round"/><circle cx="464" cy="8" r="1.15" fill="#323338"/><circle cx="460.80" cy="5.12" r="1.15" fill="#323338"/><circle cx="467.20" cy="10.88" r="1.15" fill="#323338"/><circle cx="488.6" cy="6.2" r="2.2" fill="none" stroke="#323338" stroke-width="1.0" stroke-linejoin="round" stroke-linecap="round"/><path d="M484.6 12 C485.2 9.6 486.6 8.6 488.6 8.6 C490.6 8.6 492 9.6 492.6 12" fill="none" stroke="#323338" stroke-width="1.0" stroke-linejoin="round" stroke-linecap="round"/><path d="M492.6 7.9 H494.4 M493.5 7 V8.8" fill="none" stroke="#323338" stroke-width="0.8" stroke-linejoin="round" stroke-linecap="round"/><path d="M557.6 3.6 V12.4 H567" fill="none" stroke="#323338" stroke-width="1.0" stroke-linejoin="round" stroke-linecap="round"/><path d="M559.8 9.4 L561.8 7.4 L563.6 8.8 L566.4 5.8" fill="none" stroke="#323338" stroke-width="1.0" stroke-linejoin="round" stroke-linecap="round"/><circle cx="677" cy="8.2" r="4.6" fill="none" stroke="#323338" stroke-width="1.0" stroke-linejoin="round" stroke-linecap="round"/><path d="M677 5.9 V10.5 M674.7 8.2 H679.3" fill="none" stroke="#323338" stroke-width="1.0" stroke-linejoin="round" stroke-linecap="round"/><circle cx="740.8" cy="8.3" r="0.9" fill="#323338"/><circle cx="744.5" cy="8.3" r="0.9" fill="#323338"/><circle cx="748.2" cy="8.3" r="0.9" fill="#323338"/><rect x="19.2" y="39.2" width="8.6" height="8.6" rx="0.8" fill="none" stroke="#323338" stroke-width="1.1" stroke-linejoin="round" stroke-linecap="round"/><line x1="19.2" y1="42.4" x2="27.8" y2="42.4" fill="none" stroke="#323338" stroke-width="1.1" stroke-linejoin="round" stroke-linecap="round"/><line x1="23.5" y1="42.4" x2="23.5" y2="47.8" fill="none" stroke="#323338" stroke-width="1.1" stroke-linejoin="round" stroke-linecap="round"/><circle cx="28.2" cy="48.5" r="3.1" fill="#d5d5dc" stroke="#f0f0f5" stroke-width="0.9"/><path d="M26.8 49.6 L28.2 47.6 L29.6 49.6" fill="none" stroke="#8c8c95" stroke-width="0.6" stroke-linejoin="round" stroke-linecap="round"/><circle cx="71.6" cy="43.8" r="0.6" fill="#323338"/><circle cx="74.1" cy="43.8" r="0.6" fill="#323338"/><circle cx="76.6" cy="43.8" r="0.6" fill="#323338"/><rect x="96.6" y="39.6" width="2.4" height="5" rx="0.5" fill="none" stroke="#323338" stroke-width="1.0" stroke-linejoin="round" stroke-linecap="round"/><rect x="99" y="39.6" width="2.9" height="7.7" rx="0.5" fill="none" stroke="#323338" stroke-width="1.0" stroke-linejoin="round" stroke-linecap="round"/><rect x="101.9" y="39.6" width="3.4" height="2.8" rx="0.5" fill="none" stroke="#323338" stroke-width="1.0" stroke-linejoin="round" stroke-linecap="round"/><circle cx="141" cy="43.8" r="0.6" fill="#323338"/><circle cx="143.5" cy="43.8" r="0.6" fill="#323338"/><circle cx="146" cy="43.8" r="0.6" fill="#323338"/><polygon points="167.71,39.24 168.89,39.24 169.64,40.47 170.43,40.92 171.87,40.96 172.46,41.98 171.77,43.24 171.77,44.16 172.46,45.42 171.87,46.44 170.43,46.48 169.64,46.93 168.89,48.16 167.71,48.16 166.96,46.93 166.17,46.48 164.73,46.44 164.14,45.42 164.83,44.16 164.83,43.24 164.14,41.98 164.73,40.96 166.17,40.92 166.96,40.47" fill="none" stroke="#323338" stroke-width="1.1" stroke-linejoin="round" stroke-linecap="round"/><circle cx="168.3" cy="43.7" r="1.5" fill="none" stroke="#323338" stroke-width="1.0" stroke-linejoin="round" stroke-linecap="round"/><path d="M56.8 73.6 L60 73.6 L58.4 75.5 Z" fill="#ffffff"/><circle cx="80.6" cy="74.3" r="3.7" fill="none" stroke="#323338" stroke-width="1.1" stroke-linejoin="round" stroke-linecap="round"/><line x1="83.4" y1="77.1" x2="85.2" y2="78.9" fill="none" stroke="#323338" stroke-width="1.1" stroke-linejoin="round" stroke-linecap="round"/><path d="M129.4 71.2 Q129.4 70.3 130.3 70.3 H137.2 Q138.1 70.3 138.1 71.2 V71.4 Q138.1 72.1 137.6 72.6 L134.6 75.6 V78.6 L132.3 79.3 V75.6 L129.9 72.6 Q129.4 72.1 129.4 71.4 Z" fill="none" stroke="#323338" stroke-width="1.0" stroke-linejoin="round" stroke-linecap="round"/><line x1="129.6" y1="72.4" x2="137.9" y2="72.4" fill="none" stroke="#323338" stroke-width="0.9" stroke-linejoin="round" stroke-linecap="round"/><path d="M177.3 73.4 L179.8 71.1 L182.3 73.4" fill="none" stroke="#323338" stroke-width="1.1" stroke-linejoin="round" stroke-linecap="round"/><path d="M177.3 76.3 L179.8 78.6 L182.3 76.3" fill="none" stroke="#323338" stroke-width="1.1" stroke-linejoin="round" stroke-linecap="round"/><path d="M223.5 70.5 C224.8 72 227 74 227 75.9 A3.5 3.5 0 0 1 220 75.9 C220 74 222.2 72 223.5 70.5 Z" fill="none" stroke="#323338" stroke-width="1.1" stroke-linejoin="round" stroke-linecap="round"/><circle cx="261.9" cy="67.7" r="1.45" fill="#fd7e2b"/><path d="M275.5 74.7 C277.2 72 278.4 71.2 279.9 71.2 C281.4 71.2 282.6 72 284.3 74.7 C282.6 77.4 281.4 78.2 279.9 78.2 C278.4 78.2 277.2 77.4 275.5 74.7 Z" fill="none" stroke="#323338" stroke-width="1.1" stroke-linejoin="round" stroke-linecap="round"/><circle cx="279.9" cy="74.7" r="1.7" fill="none" stroke="#323338" stroke-width="1.1" stroke-linejoin="round" stroke-linecap="round"/><path d="M38.4 110.20 L40.4 112.10 L42.4 110.20" fill="none" stroke="#ffffff" stroke-width="1.15" stroke-linecap="round" stroke-linejoin="round"/><path d="M59.2 108.40 L60.7 110.60 H57.7 Z M59.2 114.40 L60.7 112.20 H57.7 Z" fill="#43444e"/><path d="M74.4 108.70 H77.2 L79 110.50 V114.30 H74.4 Z" fill="none" stroke="#8a8b96" stroke-width="0.75" stroke-linejoin="round"/><path d="M75.7 112.70 L77.7 112.70 M76.7 111.40 V113.80" stroke="#8a8b96" stroke-width="0.5"/><path d="M91.5 108.90 H93.6 M92.5 108.90 V114.20 H96.8 M92.5 111.70 H96.8 M94.2 110.70 V112.70 M94.2 113.30 V114.70" fill="none" stroke="#8a8b96" stroke-width="0.75"/><circle cx="744.40" cy="111.20" r="4.35" fill="none" stroke="#323338" stroke-width="1.05"/><path d="M744.40 108.90 V113.50 M742.10 111.20 H746.70" fill="none" stroke="#323338" stroke-width="1.1"/><circle cx="25.30" cy="131.30" r="0.62" fill="#323338"/><circle cx="25.30" cy="133.60" r="0.62" fill="#323338"/><circle cx="25.30" cy="135.90" r="0.62" fill="#323338"/><circle cx="25.30" cy="153.50" r="0.62" fill="#323338"/><circle cx="25.30" cy="155.80" r="0.62" fill="#323338"/><circle cx="25.30" cy="158.10" r="0.62" fill="#323338"/><circle cx="25.30" cy="175.70" r="0.62" fill="#323338"/><circle cx="25.30" cy="178.00" r="0.62" fill="#323338"/><circle cx="25.30" cy="180.30" r="0.62" fill="#323338"/><circle cx="25.30" cy="197.90" r="0.62" fill="#323338"/><circle cx="25.30" cy="200.20" r="0.62" fill="#323338"/><circle cx="25.30" cy="202.50" r="0.62" fill="#323338"/><rect x="67" y="197.60" width="5.8" height="4.2" rx="0.9" fill="none" stroke="#4a4b55" stroke-width="0.9"/><circle cx="72.7" cy="202.50" r="0.55" fill="#323338"/><path d="M88.6 197.60 H90.6 M89.6 197.60 V202.20 H94.6 M89.6 199.80 H94.6" fill="none" stroke="#4a4b55" stroke-width="0.8"/><rect x="92.3" y="199.10" width="1.8" height="1.4" fill="#4a4b55"/><rect x="92.3" y="201.50" width="1.8" height="1.4" fill="#4a4b55"/><path d="M97.6 200.80 L99.2 199.20 L100.8 200.80" fill="none" stroke="#4a4b55" stroke-width="0.8"/><path d="M14.5 210 Q15.5 221.5 22.6 221.8" fill="none" stroke="#e6e6ec" stroke-width="0.8"/><circle cx="35.80" cy="222.40" r="4.35" fill="none" stroke="#323338" stroke-width="1.05"/><path d="M35.80 220.10 V224.70 M33.50 222.40 H38.10" fill="none" stroke="#323338" stroke-width="1.1"/><circle cx="25.30" cy="244.60" r="4.35" fill="none" stroke="#323338" stroke-width="1.05"/><path d="M25.30 242.30 V246.90 M23.00 244.60 H27.60" fill="none" stroke="#323338" stroke-width="1.1"/><circle cx="745.00" cy="264.50" r="0.62" fill="#323338"/><circle cx="745.00" cy="266.80" r="0.62" fill="#323338"/><circle cx="745.00" cy="269.10" r="0.62" fill="#323338"/><path d="M38.4 296.90 L40.4 298.80 L42.4 296.90" fill="none" stroke="#ffffff" stroke-width="1.15" stroke-linecap="round" stroke-linejoin="round"/><path d="M59.2 295.10 L60.7 297.30 H57.7 Z M59.2 301.10 L60.7 298.90 H57.7 Z" fill="#43444e"/><path d="M74.4 295.40 H77.2 L79 297.20 V301.00 H74.4 Z" fill="none" stroke="#8a8b96" stroke-width="0.75" stroke-linejoin="round"/><path d="M75.7 299.40 L77.7 299.40 M76.7 298.10 V300.50" stroke="#8a8b96" stroke-width="0.5"/><path d="M91.5 295.60 H93.6 M92.5 295.60 V300.90 H96.8 M92.5 298.40 H96.8 M94.2 297.40 V299.40 M94.2 300.00 V301.40" fill="none" stroke="#8a8b96" stroke-width="0.75"/><circle cx="744.40" cy="297.90" r="4.35" fill="none" stroke="#323338" stroke-width="1.05"/><path d="M744.40 295.60 V300.20 M742.10 297.90 H746.70" fill="none" stroke="#323338" stroke-width="1.1"/><circle cx="25.30" cy="318.00" r="0.62" fill="#323338"/><circle cx="25.30" cy="320.30" r="0.62" fill="#323338"/><circle cx="25.30" cy="322.60" r="0.62" fill="#323338"/><circle cx="25.30" cy="340.20" r="0.62" fill="#323338"/><circle cx="25.30" cy="342.50" r="0.62" fill="#323338"/><circle cx="25.30" cy="344.80" r="0.62" fill="#323338"/><circle cx="25.30" cy="364.70" r="4.35" fill="none" stroke="#323338" stroke-width="1.05"/><path d="M25.30 362.40 V367.00 M23.00 364.70 H27.60" fill="none" stroke="#323338" stroke-width="1.1"/><circle cx="745.00" cy="384.60" r="0.62" fill="#323338"/><circle cx="745.00" cy="386.90" r="0.62" fill="#323338"/><circle cx="745.00" cy="389.20" r="0.62" fill="#323338"/><circle cx="23.70" cy="417.10" r="4.35" fill="none" stroke="#323338" stroke-width="1.05"/><path d="M23.70 414.80 V419.40 M21.40 417.10 H26.00" fill="none" stroke="#323338" stroke-width="1.1"/></svg>
</div>
</body></html>
